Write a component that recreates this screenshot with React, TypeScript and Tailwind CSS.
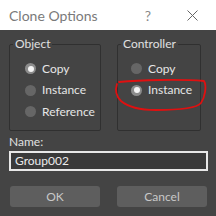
import React from 'react'

function Radio({ label, checked }: { label: string; checked?: boolean }) {
  return (
    <div className="flex h-[21.5px] items-center">
      {checked ? (
        <span className="flex h-[11px] w-[11px] items-center justify-center rounded-full bg-[#8c8c8c]">
          <span className="h-[6px] w-[6px] rounded-full bg-[#f4f4f4]" />
        </span>
      ) : (
        <span className="h-[11px] w-[11px] rounded-full bg-[#666666]" />
      )}
      <span className="ml-[6px] text-[12px] leading-none text-[#e6e6e6]">{label}</span>
    </div>
  )
}

export default function App() {
  return (
    <div
      className="relative flex h-[216px] w-[216px] flex-col overflow-hidden bg-[#444444]"
      style={{ fontFamily: 'Lato, "Noto Sans", sans-serif' }}
    >
      {/* title bar */}
      <div className="flex h-[30px] shrink-0 items-center bg-white">
        <span className="ml-[9px] text-[14px] text-[#7a7a7a]">Clone Options</span>
        <span className="ml-auto mr-[36px] text-[14px] text-[#888888]">?</span>
        <svg width="11" height="11" viewBox="0 0 11 11" className="mr-[18px]">
          <path d="M0.5 0.5 L10.5 10.5 M10.5 0.5 L0.5 10.5" stroke="#666" strokeWidth="1" />
        </svg>
      </div>

      <div className="flex flex-col px-[9px] pt-[6px]">
        <div className="flex gap-[16px]">
          <fieldset className="h-[95px] w-[92px] rounded-[2px] border border-[#303030]">
            <legend className="ml-[3px] px-[2px] text-[12px] leading-[16px] text-[#e0e0e0]">Object</legend>
            <div className="mt-[6px] flex flex-col pl-[15px]">
              <Radio label="Copy" checked />
              <Radio label="Instance" />
              <Radio label="Reference" />
            </div>
          </fieldset>
          <fieldset className="h-[95px] w-[84px] rounded-[2px] border border-[#303030]">
            <legend className="ml-[3px] px-[2px] text-[12px] leading-[16px] text-[#e0e0e0]">Controller</legend>
            <div className="mt-[6px] flex flex-col pl-[13px]">
              <Radio label="Copy" />
              <Radio label="Instance" checked />
            </div>
          </fieldset>
        </div>

        <div className="mt-[3px] text-[12px] leading-[16px] text-[#e0e0e0]">Name:</div>
        <div className="mt-[1px] flex h-[20px] w-[199px] items-center border-2 border-[#e8e8e8] bg-[#3a3a3a] px-[4px] text-[12px] text-[#ececec]">
          Group002
        </div>

        <div className="mt-[15px] flex justify-between pl-[1px]">
          <button className="h-[21px] w-[90px] rounded-[3px] bg-[#5e5e5e] text-[12px] text-[#c8c8c8]">OK</button>
          <button className="h-[21px] w-[90px] rounded-[3px] bg-[#5e5e5e] text-[12px] text-[#c8c8c8]">Cancel</button>
        </div>
      </div>

      {/* red hand-drawn annotation */}
      <svg className="pointer-events-none absolute left-0 top-0" width="216" height="216" viewBox="0 0 216 216">
        <path
          d="M119 82 C140 80 180 79 204 81 C207 86 205 97 201 103 C196 109 170 110 156 110 C140 110 128 107 121 101 C116 96 115 90 117 84"
          fill="none"
          stroke="#e01010"
          strokeWidth="1.8"
          strokeLinecap="round"
        />
      </svg>
    </div>
  )
}
